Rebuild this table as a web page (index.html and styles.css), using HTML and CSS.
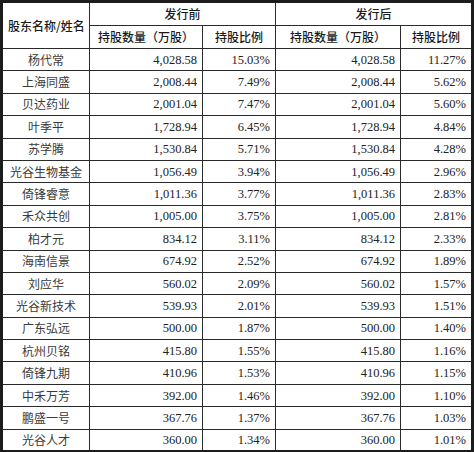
FILE: index.html
```html
<!DOCTYPE html>
<html lang="zh">
<head>
<meta charset="utf-8">
<link rel="stylesheet" href="styles.css">
</head>
<body>
<table class="holders">
  <colgroup>
    <col class="c-name">
    <col class="c-qty1">
    <col class="c-pct1">
    <col class="c-qty2">
    <col class="c-pct2">
  </colgroup>
  <thead>
    <tr class="h1">
      <th rowspan="2">股东名称/姓名</th>
      <th colspan="2">发行前</th>
      <th colspan="2">发行后</th>
    </tr>
    <tr class="h2">
      <th>持股数量（万股）</th>
      <th>持股比例</th>
      <th>持股数量（万股）</th>
      <th>持股比例</th>
    </tr>
  </thead>
  <tbody>
    <tr><td class="name">杨代常</td><td class="num">4,028.58</td><td class="num">15.03%</td><td class="num">4,028.58</td><td class="num">11.27%</td></tr>
    <tr><td class="name">上海同盛</td><td class="num">2,008.44</td><td class="num">7.49%</td><td class="num">2,008.44</td><td class="num">5.62%</td></tr>
    <tr><td class="name">贝达药业</td><td class="num">2,001.04</td><td class="num">7.47%</td><td class="num">2,001.04</td><td class="num">5.60%</td></tr>
    <tr><td class="name">叶季平</td><td class="num">1,728.94</td><td class="num">6.45%</td><td class="num">1,728.94</td><td class="num">4.84%</td></tr>
    <tr><td class="name">苏学腾</td><td class="num">1,530.84</td><td class="num">5.71%</td><td class="num">1,530.84</td><td class="num">4.28%</td></tr>
    <tr><td class="name">光谷生物基金</td><td class="num">1,056.49</td><td class="num">3.94%</td><td class="num">1,056.49</td><td class="num">2.96%</td></tr>
    <tr><td class="name">倚锋睿意</td><td class="num">1,011.36</td><td class="num">3.77%</td><td class="num">1,011.36</td><td class="num">2.83%</td></tr>
    <tr><td class="name">禾众共创</td><td class="num">1,005.00</td><td class="num">3.75%</td><td class="num">1,005.00</td><td class="num">2.81%</td></tr>
    <tr><td class="name">柏才元</td><td class="num">834.12</td><td class="num">3.11%</td><td class="num">834.12</td><td class="num">2.33%</td></tr>
    <tr><td class="name">海南信景</td><td class="num">674.92</td><td class="num">2.52%</td><td class="num">674.92</td><td class="num">1.89%</td></tr>
    <tr><td class="name">刘应华</td><td class="num">560.02</td><td class="num">2.09%</td><td class="num">560.02</td><td class="num">1.57%</td></tr>
    <tr><td class="name">光谷新技术</td><td class="num">539.93</td><td class="num">2.01%</td><td class="num">539.93</td><td class="num">1.51%</td></tr>
    <tr><td class="name">广东弘远</td><td class="num">500.00</td><td class="num">1.87%</td><td class="num">500.00</td><td class="num">1.40%</td></tr>
    <tr><td class="name">杭州贝铭</td><td class="num">415.80</td><td class="num">1.55%</td><td class="num">415.80</td><td class="num">1.16%</td></tr>
    <tr><td class="name">倚锋九期</td><td class="num">410.96</td><td class="num">1.53%</td><td class="num">410.96</td><td class="num">1.15%</td></tr>
    <tr><td class="name">中禾万芳</td><td class="num">392.00</td><td class="num">1.46%</td><td class="num">392.00</td><td class="num">1.10%</td></tr>
    <tr><td class="name">鹏盛一号</td><td class="num">367.76</td><td class="num">1.37%</td><td class="num">367.76</td><td class="num">1.03%</td></tr>
    <tr><td class="name">光谷人才</td><td class="num">360.00</td><td class="num">1.34%</td><td class="num">360.00</td><td class="num">1.01%</td></tr>
  </tbody>
</table>
</body>
</html>
```

FILE: styles.css
```css
html, body {
  margin: 0;
  padding: 0;
  background: #ffffff;
}

.holders {
  box-sizing: border-box;
  width: 474px;
  height: 452px;
  table-layout: fixed;
  border-collapse: collapse;
  border: 3px solid #1c1c1c;
  font-family: "Liberation Serif", "Noto Sans CJK SC", serif;
  font-size: 12px;
  color: #222222;
}

.c-name { width: 88px; }
.c-qty1 { width: 113px; }
.c-pct1 { width: 73px; }
.c-qty2 { width: 125px; }
.c-pct2 { width: 72px; }

.holders th,
.holders td {
  border: 1px solid #2a2a2a;
  padding: 0 5px;
  vertical-align: middle;
  white-space: nowrap;
  overflow: hidden;
  line-height: 14px;
}

.holders th {
  font-family: "Noto Sans CJK SC", sans-serif;
  font-weight: 500;
  font-size: 12px;
  text-align: center;
  color: #1a1a1a;
}

.h1 { height: 24px; }
.h2 { height: 23px; }

.holders tbody tr { height: 22.4px; }

.name {
  text-align: center;
  font-family: "Noto Sans CJK SC", sans-serif;
  font-weight: 400;
  color: #3a3a3a;
}

.num {
  text-align: right;
  font-size: 12.5px;
}
```
